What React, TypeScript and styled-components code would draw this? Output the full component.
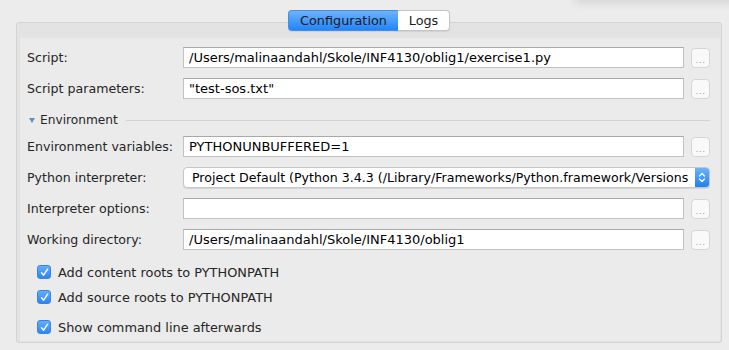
import React from "react";
import styled, { createGlobalStyle } from "styled-components";

const Global = createGlobalStyle`
  html, body { margin: 0; padding: 0; background: #ececec; }
  body { font-family: "DejaVu Sans", "Liberation Sans", sans-serif; -webkit-font-smoothing: antialiased; }
`;

const Page = styled.div`
  position: relative;
  width: 729px;
  height: 350px;
  padding-top: 10px;
  box-sizing: border-box;
  overflow: hidden;
`;

const TopShadow = styled.div`
  position: absolute;
  top: -20px;
  left: 575px;
  width: 200px;
  height: 20px;
  box-shadow: 0 3px 10px rgba(0, 0, 0, 0.1);
`;

const TabBar = styled.div`
  position: relative;
  z-index: 2;
  display: flex;
  justify-content: center;
  width: 706px;
  margin-left: 16px;
  margin-bottom: -9px;
`;

const Tab = styled.div<{ $active?: boolean }>`
  height: 21px;
  box-sizing: border-box;
  display: flex;
  align-items: center;
  justify-content: center;
  font-size: 12.8px;
  color: #1b1b1b;
  border: 1px solid ${(p) => (p.$active ? "#3f8ff0" : "#c4c4c4")};
  background: ${(p) =>
    p.$active ? "linear-gradient(#6db3fb, #2384f8)" : "#ffffff"};
  box-shadow: 0 1px 1px rgba(0, 0, 0, 0.08);
  &:first-child {
    border-radius: 4px 0 0 4px;
    border-right: none;
    width: 110px;
  }
  &:last-child {
    border-radius: 0 4px 4px 0;
    border-left: none;
    width: 52px;
  }
`;

const Panel = styled.div`
  margin-left: 16px;
  width: 706px;
  height: 321px;
  box-sizing: border-box;
  border: 1px solid #d3d3d3;
  border-radius: 3px;
  background: #e3e3e3;
  padding: 15px 1px 1px 3px;
`;

const Inner = styled.div`
  height: 100%;
  box-sizing: border-box;
  background: #ebebeb;
  padding: 9px 10px 0 7px;
  display: flex;
  flex-direction: column;
`;

const Row = styled.div<{ $mt?: number }>`
  display: grid;
  grid-template-columns: 149px 1fr 19px;
  column-gap: 7px;
  align-items: center;
  height: 21px;
  margin-top: ${(p) => p.$mt ?? 0}px;
`;

const Label = styled.div`
  font-size: 12.6px;
  color: #262626;
  white-space: nowrap;
`;

const Field = styled.div`
  height: 21px;
  box-sizing: border-box;
  background: #fff;
  border: 1px solid #c2c2c2;
  border-top-color: #a9a9a9;
  font-size: 13px;
  color: #000;
  padding: 0 5px;
  display: flex;
  align-items: center;
  white-space: nowrap;
  overflow: hidden;
`;

const DotsButton = styled.div`
  height: 20px;
  box-sizing: border-box;
  border: 1px solid #d6d6d6;
  border-radius: 4px;
  background: #f9f9f9;
  color: #a0a0a0;
  font-size: 9px;
  letter-spacing: 0.5px;
  display: flex;
  align-items: flex-end;
  justify-content: center;
  padding-bottom: 2px;
  line-height: 1;
`;

const Combo = styled.div`
  grid-column: 2 / 4;
  height: 21px;
  box-sizing: border-box;
  display: flex;
  background: #fff;
  border: 1px solid #c6c6c6;
  border-radius: 4px;
  box-shadow: 0 1px 1px rgba(0, 0, 0, 0.1);
  overflow: hidden;
`;

const ComboText = styled.div`
  flex: 1;
  min-width: 0;
  font-size: 12.6px;
  color: #000;
  padding-left: 8px;
  display: flex;
  align-items: center;
  white-space: nowrap;
  overflow: hidden;
`;

const Stepper = styled.div`
  width: 14px;
  flex: none;
  background: linear-gradient(#6db3fb, #1f7ff5);
  display: flex;
  align-items: center;
  justify-content: center;
`;

const Section = styled.div`
  display: flex;
  align-items: center;
  height: 37px;
  box-sizing: border-box;
  padding: 5px 0 0 2px;
`;

const Triangle = styled.div`
  width: 0;
  height: 0;
  border-left: 3.5px solid transparent;
  border-right: 3.5px solid transparent;
  border-top: 5px solid #6a8fbf;
  margin-right: 5px;
  margin-top: 1px;
`;

const SectionTitle = styled.div`
  font-size: 12.2px;
  color: #262626;
  margin-right: 8px;
`;

const SectionLine = styled.div`
  flex: 1;
  height: 1px;
  background: #d2d2d2;
`;

const CheckRow = styled.div<{ $mt: number }>`
  display: flex;
  align-items: center;
  height: 14px;
  margin-top: ${(p) => p.$mt}px;
  padding-left: 10px;
`;

const Box = styled.div`
  width: 14px;
  height: 14px;
  box-sizing: border-box;
  border-radius: 3px;
  background: linear-gradient(#64adf9, #2d86f3);
  border: 1px solid #3a84e0;
  display: flex;
  align-items: center;
  justify-content: center;
  margin-right: 7px;
`;

const CheckLabel = styled.div`
  font-size: 12.9px;
  color: #262626;
  white-space: nowrap;
`;

const Check = () => (
  <svg width="9" height="9" viewBox="0 0 9 9">
    <path d="M1.5 4.8 L3.6 7.2 L7.6 1.2" fill="none" stroke="#fff" strokeWidth="1.4" strokeLinecap="round" strokeLinejoin="round" />
  </svg>
);

const Arrows = () => (
  <svg width="8" height="13" viewBox="0 0 8 13">
    <path d="M1.5 5 L4 2.5 L6.5 5 M1.5 8 L4 10.5 L6.5 8" fill="none" stroke="#fff" strokeWidth="1.3" strokeLinecap="round" strokeLinejoin="round" />
  </svg>
);

const TextRow = ({ label, value, mt }: { label: string; value: string; mt?: number }) => (
  <Row $mt={mt}>
    <Label>{label}</Label>
    <Field>{value}</Field>
    <DotsButton>...</DotsButton>
  </Row>
);

const CheckItem = ({ text, mt }: { text: string; mt: number }) => (
  <CheckRow $mt={mt}>
    <Box>
      <Check />
    </Box>
    <CheckLabel>{text}</CheckLabel>
  </CheckRow>
);

export default function App() {
  return (
    <>
      <Global />
      <Page>
        <TopShadow />
        <TabBar>
          <Tab $active>Configuration</Tab>
          <Tab>Logs</Tab>
        </TabBar>
        <Panel>
          <Inner>
            <TextRow label="Script:" value="/Users/malinaandahl/Skole/INF4130/oblig1/exercise1.py" />
            <TextRow label="Script parameters:" value={'"test-sos.txt"'} mt={10} />
            <Section>
              <Triangle />
              <SectionTitle>Environment</SectionTitle>
              <SectionLine />
            </Section>
            <TextRow label="Environment variables:" value="PYTHONUNBUFFERED=1" />
            <Row $mt={10}>
              <Label>Python interpreter:</Label>
              <Combo>
                <ComboText>Project Default (Python 3.4.3 (/Library/Frameworks/Python.framework/Versions</ComboText>
                <Stepper>
                  <Arrows />
                </Stepper>
              </Combo>
            </Row>
            <TextRow label="Interpreter options:" value="" mt={10} />
            <TextRow label="Working directory:" value="/Users/malinaandahl/Skole/INF4130/oblig1" mt={10} />
            <CheckItem text="Add content roots to PYTHONPATH" mt={15} />
            <CheckItem text="Add source roots to PYTHONPATH" mt={11} />
            <CheckItem text="Show command line afterwards" mt={16} />
          </Inner>
        </Panel>
      </Page>
    </>
  );
}
